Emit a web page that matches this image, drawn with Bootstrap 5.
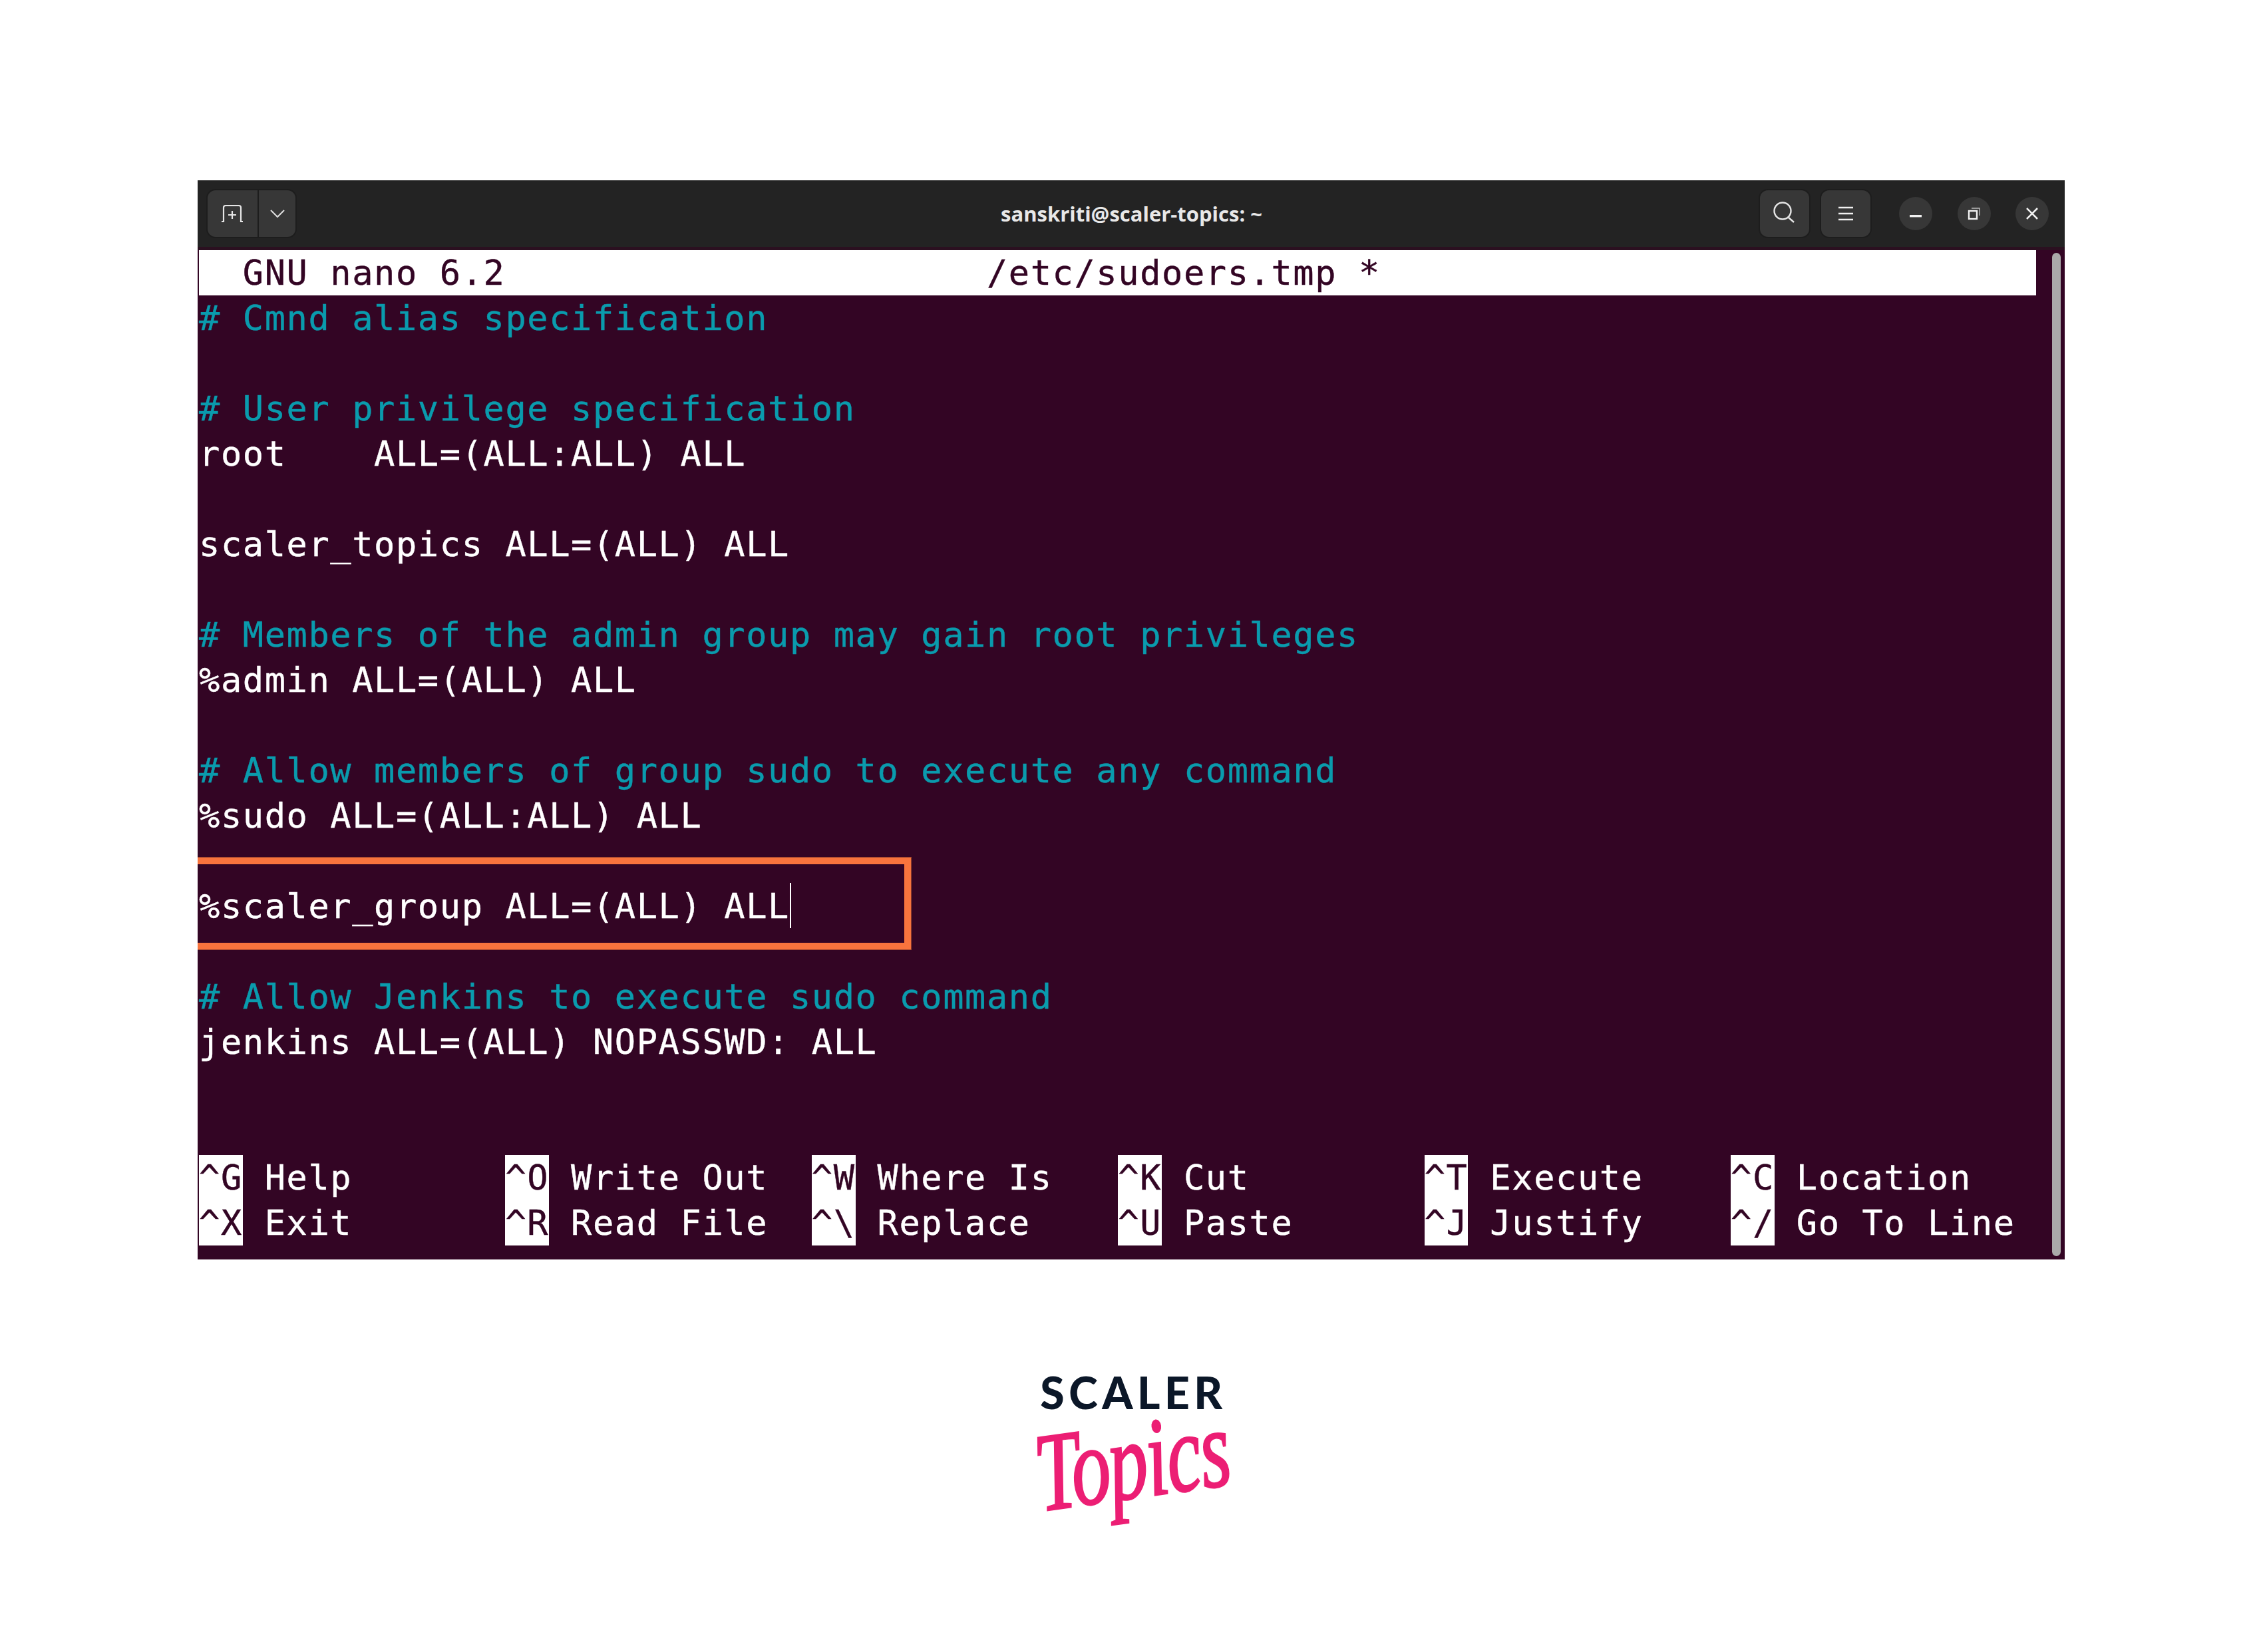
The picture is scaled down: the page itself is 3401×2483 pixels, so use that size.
<!DOCTYPE html>
<html lang="en">
<head>
<meta charset="utf-8">
<title>nano sudoers</title>
<link href="https://cdn.jsdelivr.net/npm/bootstrap@5.3.0/dist/css/bootstrap.min.css" rel="stylesheet">
<style>
html,body{background:#fff}
.shot{width:3401px;height:2483px;padding-top:271px}
.win{width:2806px;height:1622px;background:#330524;overflow:hidden;margin-right:1px}
.tbar{height:100px;background:#232323;padding:0 24px 0 15px}
.tstrip{height:5px;background:#2b1020}
.side{flex:1 1 0}
.ttl{font-family:"Open Sans","Noto Sans",sans-serif;font-weight:700;font-size:31px;color:#e8e8e8;white-space:pre;margin-left:10px}
.hbtn{height:70px;background:#373737;border-radius:12px;box-shadow:0 0 0 2px #1d1d1d}
.hbtn-a{width:75px;border-radius:12px 0 0 12px}
.hbtn-b{width:55px;border-radius:0 12px 12px 0;margin-left:2px}
.hbtn-c{width:74px}
.gap-menu{margin-left:18px}
.gap-min{margin-left:43px}
.gap-max{margin-left:38px}
.gap-close{margin-left:37px}
.circ{width:50px;height:50px;border-radius:50%;background:#373737}
.term{height:1517px}
.grid{width:2763px;padding-left:2px;font-family:"DejaVu Sans Mono","Liberation Mono",monospace;font-size:52px;letter-spacing:1.58px;color:#fff}
.ln{height:68px;line-height:68px;white-space:pre;-webkit-text-stroke:.4px currentColor}
.ln-top{background:#fff;color:#330524}
.cm{color:#0a9bad}
.key{background:#fff;color:#330524;display:inline-block;height:68px}
.scroll{width:13px;height:1508px;margin:4px 6px 0 0;background:#aaa;border-radius:7px}
.hl{position:absolute;left:0;top:913px;width:1072px;height:138px;border:solid #f8743d;border-width:10px 10px 10px 0;box-shadow:0 0 0 1px #96422e}
.cursor{position:absolute;left:890px;top:951px;width:2px;height:68px;background:#fff}
.logo{width:300px;margin-top:176px}
.lg-top{font-family:Lato,"Open Sans",sans-serif;font-weight:900;font-size:66px;line-height:47px;letter-spacing:6.5px;color:#0b1728;margin-right:-6px}
.lg-script{font-family:"Liberation Serif",serif;font-style:italic;font-size:118px;line-height:120px;color:#ec1e74;-webkit-text-stroke:2px #ec1e74;transform:rotate(-8deg) scaleY(1.42);margin-top:20px;letter-spacing:-2px}
</style>
</head>
<body class="m-0">
<div class="shot d-flex flex-column align-items-center">
  <div class="win d-flex flex-column">
    <div class="tbar d-flex align-items-center">
      <div class="side d-flex align-items-center">
        <div class="hbtn hbtn-a d-flex align-items-center justify-content-center">
          <svg width="36" height="28" viewBox="0 0 36 28" fill="none" stroke="#e6e6e6" stroke-width="2.2"><path d="M1 26H4V5Q4 2 7 2H27Q30 2 30 5V26H33"/><path d="M17 10V22M11 16H23"/></svg>
        </div>
        <div class="hbtn hbtn-b d-flex align-items-center justify-content-center">
          <svg width="24" height="14" viewBox="0 0 24 14" fill="none" stroke="#d8d8d8" stroke-width="2.2"><path d="M2 2L12 12L22 2"/></svg>
        </div>
      </div>
      <div class="ttl">sanskriti@scaler-topics: ~</div>
      <div class="side d-flex align-items-center justify-content-end">
        <div class="hbtn hbtn-c d-flex align-items-center justify-content-center">
          <svg width="36" height="36" viewBox="0 0 36 36" fill="none" stroke="#e6e6e6" stroke-width="2.4"><circle cx="15" cy="14" r="12.5"/><path d="M24 24L32 31"/></svg>
        </div>
        <div class="hbtn hbtn-c gap-menu d-flex align-items-center justify-content-center">
          <svg width="24" height="22" viewBox="0 0 24 22" fill="none" stroke="#f0f0f0" stroke-width="2.4"><path d="M1 2H23M1 11H23M1 20H23"/></svg>
        </div>
        <div class="circ gap-min d-flex align-items-center justify-content-center">
          <svg width="20" height="20" viewBox="0 0 20 20" fill="#f0f0f0"><rect x="1" y="12" width="18" height="3.4"/></svg>
        </div>
        <div class="circ gap-max d-flex align-items-center justify-content-center">
          <svg width="20" height="20" viewBox="0 0 20 20" fill="none" stroke="#f0f0f0" stroke-width="2.4"><rect x="2" y="6" width="12" height="12"/><path d="M6 2H18V13" stroke="#bbb" stroke-width="1.4"/></svg>
        </div>
        <div class="circ gap-close d-flex align-items-center justify-content-center">
          <svg width="20" height="20" viewBox="0 0 20 20" fill="none" stroke="#f0f0f0" stroke-width="2.6"><path d="M2 2L18 18M18 2L2 18"/></svg>
        </div>
      </div>
    </div>
    <div class="tstrip"></div>
    <div class="term d-flex justify-content-between position-relative">
      <div class="grid">
        <div class="ln ln-top">  GNU nano 6.2                      /etc/sudoers.tmp *</div>
        <div class="ln cm"># Cmnd alias specification</div>
        <div class="ln"></div>
        <div class="ln cm"># User privilege specification</div>
        <div class="ln">root    ALL=(ALL:ALL) ALL</div>
        <div class="ln"></div>
        <div class="ln">scaler_topics ALL=(ALL) ALL</div>
        <div class="ln"></div>
        <div class="ln cm"># Members of the admin group may gain root privileges</div>
        <div class="ln">%admin ALL=(ALL) ALL</div>
        <div class="ln"></div>
        <div class="ln cm"># Allow members of group sudo to execute any command</div>
        <div class="ln">%sudo ALL=(ALL:ALL) ALL</div>
        <div class="ln"></div>
        <div class="ln">%scaler_group ALL=(ALL) ALL</div>
        <div class="ln"></div>
        <div class="ln cm"># Allow Jenkins to execute sudo command</div>
        <div class="ln">jenkins ALL=(ALL) NOPASSWD: ALL</div>
        <div class="ln"></div>
        <div class="ln"></div>
        <div class="ln"><span class="key">^G</span> Help       <span class="key">^O</span> Write Out  <span class="key">^W</span> Where Is   <span class="key">^K</span> Cut        <span class="key">^T</span> Execute    <span class="key">^C</span> Location</div>
        <div class="ln"><span class="key">^X</span> Exit       <span class="key">^R</span> Read File  <span class="key">^\</span> Replace    <span class="key">^U</span> Paste      <span class="key">^J</span> Justify    <span class="key">^/</span> Go To Line</div>
      </div>
      <div class="scroll"></div>
      <div class="hl"></div>
      <div class="cursor"></div>
    </div>
  </div>
  <div class="logo d-flex flex-column align-items-center">
    <div class="lg-top">SCALER</div>
    <div class="lg-script">Topics</div>
  </div>
</div>
<script src="https://cdn.jsdelivr.net/npm/bootstrap@5.3.0/dist/js/bootstrap.bundle.min.js"></script>
</body>
</html>
